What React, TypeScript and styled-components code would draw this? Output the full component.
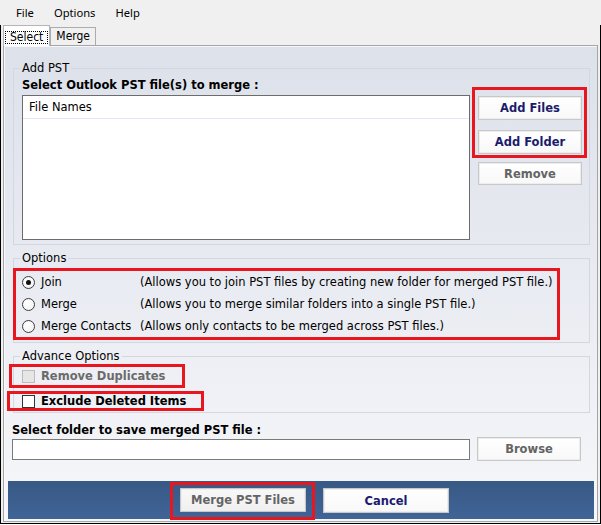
import React from "react";
import styled, { createGlobalStyle } from "styled-components";

const UI = `"DejaVu Sans", Tahoma, Verdana, sans-serif`;

const GlobalStyle = createGlobalStyle`
  html, body { margin: 0; padding: 0; background: #ffffff; }
  * { box-sizing: border-box; }
`;

const Window = styled.div`
  width: 601px;
  height: 524px;
  display: flex;
  flex-direction: column;
  background: #f0f0f0;
  font-family: ${UI};
  font-size: 11.5px;
  color: #000;
`;

const MenuBar = styled.div`
  height: 25px;
  flex: none;
  display: flex;
  align-items: center;
  padding-left: 6px;
  font-family: "Noto Sans", "Open Sans", sans-serif;
  font-size: 11.2px;
`;

const MenuItem = styled.span`
  padding: 0 10px;
  line-height: 18px;
`;

const Body = styled.div`
  flex: 1;
  min-height: 0;
  display: flex;
  flex-direction: column;
  border: 1px solid #000;
  border-top: none;
  padding: 0 2px 1px 2px;
`;

const TabStrip = styled.div`
  height: 20px;
  flex: none;
  display: flex;
  align-items: flex-end;
`;

const Tab = styled.div<{ $active?: boolean }>`
  position: relative;
  z-index: ${(p) => (p.$active ? 1 : 0)};
  display: flex;
  align-items: center;
  height: ${(p) => (p.$active ? 21 : 18)}px;
  margin-bottom: ${(p) => (p.$active ? -1 : 0)}px;
  padding: ${(p) => (p.$active ? "4px 1px 2px 1px" : "0 5px 1px 5px")};
  background: ${(p) => (p.$active ? "#ffffff" : "#f0f0f0")};
  border: 1px solid ${(p) => (p.$active ? "#b4b4b4" : "#acacac")};
  border-bottom: none;
  font-family: "DejaVu Sans Condensed", "DejaVu Sans", sans-serif;
  font-size: 12px;
  line-height: 14px;
`;

const FocusLabel = styled.span`
  border: 1px dotted #000;
  padding: 0 4px;
  line-height: 11px;
`;

const TabPage = styled.div`
  flex: 1;
  min-height: 0;
  display: flex;
  flex-direction: column;
  border: 1px solid #a5a5a5;
  box-shadow: inset 1px 1px 0 #f7f8fb;
  background: linear-gradient(#dde1ea 0%, #e6e9f0 40%, #f6f7fa 100%);
  padding: 16px 7px 0 9px;
`;

const Group = styled.fieldset<{ $pb: number; $mt?: number }>`
  margin: ${(p) => p.$mt ?? 0}px 0 0 0;
  padding: 0 0 ${(p) => p.$pb}px 8px;
  border: 1px solid #d3d7df;
  min-width: 0;
`;

const Legend = styled.legend`
  padding: 0 2px;
  margin-left: -2px;
  line-height: 13px;
`;

const Row = styled.div`
  display: flex;
  align-items: flex-start;
`;

const LeftCol = styled.div`
  display: flex;
  flex-direction: column;
  padding-top: 4px;
`;

const BoldLabel = styled.div<{ $muted?: boolean }>`
  font-weight: bold;
  line-height: 13px;
  white-space: nowrap;
  color: ${(p) => (p.$muted ? "#6b6b6b" : "#000")};
`;

const ListBox = styled.div`
  margin-top: 3px;
  width: 448px;
  height: 145px;
  background: #fff;
  border: 1px solid #6c6c6c;
`;

const ListHeader = styled.div`
  height: 23px;
  line-height: 22px;
  padding-left: 6px;
  border-bottom: 1px solid #e1e8f2;
`;

const RightCol = styled.div`
  margin-top: 12px;
  margin-left: 2px;
  display: flex;
  flex-direction: column;
  align-items: flex-start;
`;

const Highlight = styled.div<{
  $pad: string;
  $w?: number;
  $h?: number;
  $ml?: number;
  $mt?: number;
  $mb?: number;
}>`
  border: 3px solid #e8161e;
  padding: ${(p) => p.$pad};
  width: ${(p) => (p.$w ? `${p.$w}px` : "auto")};
  height: ${(p) => (p.$h ? `${p.$h}px` : "auto")};
  margin-left: ${(p) => p.$ml ?? 0}px;
  margin-top: ${(p) => p.$mt ?? 0}px;
  margin-bottom: ${(p) => p.$mb ?? 0}px;
`;

const ButtonStack = styled.div`
  display: flex;
  flex-direction: column;
  gap: 10px;
`;

const Button = styled.button<{
  $primary?: boolean;
  $w: number;
  $h: number;
  $shade?: boolean;
  $ml?: number;
  $mt?: number;
}>`
  width: ${(p) => p.$w}px;
  height: ${(p) => p.$h}px;
  flex: none;
  margin-left: ${(p) => p.$ml ?? 0}px;
  margin-top: ${(p) => p.$mt ?? 0}px;
  padding: 0;
  font-family: ${UI};
  font-size: 11.5px;
  font-weight: bold;
  color: ${(p) => (p.$primary ? "#1b1b6e" : "#646464")};
  background: ${(p) =>
    p.$shade ? "linear-gradient(#f8f8f8, #f0f0f0)" : "linear-gradient(#ffffff, #f8f8f8)"};
  border: 1px solid #c8c8c8;
  box-shadow: inset 0 0 0 1px #ededed;
  border-radius: 0;
  cursor: default;
`;

const OptionRow = styled.div`
  display: grid;
  grid-template-columns: 13px 93px auto;
  column-gap: 6px;
  align-items: center;
  height: 22px;
  white-space: nowrap;
`;

const Radio = styled.span`
  width: 13px;
  height: 13px;
  border-radius: 50%;
  border: 1px solid #3c3c3c;
  background: radial-gradient(circle at 40% 35%, #ffffff 0%, #f1f1f1 100%);
  display: flex;
  align-items: center;
  justify-content: center;
`;

const RadioDot = styled.span`
  width: 5px;
  height: 5px;
  border-radius: 50%;
  background: #111;
`;

const CheckRow = styled.div`
  display: flex;
  align-items: center;
  gap: 6px;
  height: 100%;
`;

const Checkbox = styled.span<{ $disabled?: boolean }>`
  width: 13px;
  height: 13px;
  flex: none;
  background: ${(p) => (p.$disabled ? "#e6e6e6" : "#ffffff")};
  border: 1px solid ${(p) => (p.$disabled ? "#bcbcbc" : "#333333")};
`;

const SaveLabel = styled(BoldLabel)`
  margin: 11px 0 0 -1px;
`;

const SaveRow = styled.div`
  display: flex;
  align-items: center;
  margin-left: -1px;
`;

const PathInput = styled.div`
  width: 458px;
  height: 21px;
  background: #fff;
  border: 1px solid #7a7a7a;
`;

const Footer = styled.div`
  margin: 20px -4px 0 -5px;
  height: 38px;
  flex: none;
  display: flex;
  align-items: flex-start;
  padding: 1px 0 0 162px;
  background: linear-gradient(#385985, #3f6496);
`;

const options = [
  { label: "Join", desc: "(Allows you to join PST files by creating new folder for merged PST file.)", checked: true },
  { label: "Merge", desc: "(Allows you to merge similar folders into a single PST file.)", checked: false },
  { label: "Merge Contacts", desc: "(Allows only contacts to be merged across PST files.)", checked: false },
];

export default function App() {
  return (
    <>
      <GlobalStyle />
      <Window>
        <MenuBar>
          <MenuItem>File</MenuItem>
          <MenuItem>Options</MenuItem>
          <MenuItem>Help</MenuItem>
        </MenuBar>
        <Body>
          <TabStrip>
            <Tab $active>
              <FocusLabel>Select</FocusLabel>
            </Tab>
            <Tab>Merge</Tab>
          </TabStrip>
          <TabPage>
            <Group $pb={4}>
              <Legend>Add PST</Legend>
              <Row>
                <LeftCol>
                  <BoldLabel>Select Outlook PST file(s) to merge :</BoldLabel>
                  <ListBox>
                    <ListHeader>File Names</ListHeader>
                  </ListBox>
                </LeftCol>
                <RightCol>
                  <Highlight $pad="6px 2px 1px 3px">
                    <ButtonStack>
                      <Button $primary $w={104} $h={24}>Add Files</Button>
                      <Button $primary $w={104} $h={24}>Add Folder</Button>
                    </ButtonStack>
                  </Highlight>
                  <Button $w={104} $h={23} $ml={6} $mt={4}>Remove</Button>
                </RightCol>
              </Row>
            </Group>

            <Group $pb={2} $mt={7}>
              <Legend>Options</Legend>
              <Highlight $pad="0 0 0 6px" $w={547} $ml={-9} $mt={3}>
                {options.map((o) => (
                  <OptionRow key={o.label}>
                    <Radio>{o.checked && <RadioDot />}</Radio>
                    <span>{o.label}</span>
                    <span>{o.desc}</span>
                  </OptionRow>
                ))}
              </Highlight>
            </Group>

            <Group $pb={1} $mt={7}>
              <Legend>Advance Options</Legend>
              <Highlight $pad="0 0 0 10px" $w={176} $h={24} $ml={-13} $mt={1}>
                <CheckRow>
                  <Checkbox $disabled />
                  <BoldLabel $muted>Remove Duplicates</BoldLabel>
                </CheckRow>
              </Highlight>
              <Highlight $pad="0 0 0 12px" $w={197} $h={20} $ml={-15} $mt={3}>
                <CheckRow>
                  <Checkbox />
                  <BoldLabel>Exclude Deleted Items</BoldLabel>
                </CheckRow>
              </Highlight>
            </Group>

            <SaveLabel>Select folder to save merged PST file :</SaveLabel>
            <SaveRow>
              <PathInput />
              <Button $w={104} $h={24} $ml={7}>Browse</Button>
            </SaveRow>

            <Footer>
              <Highlight $pad="3px 6px 5px 7px" $mb={-2}>
                <Button $w={126} $h={24} $shade>Merge PST Files</Button>
              </Highlight>
              <Button $primary $w={126} $h={25} $ml={8} $mt={6}>Cancel</Button>
            </Footer>
          </TabPage>
        </Body>
      </Window>
    </>
  );
}
